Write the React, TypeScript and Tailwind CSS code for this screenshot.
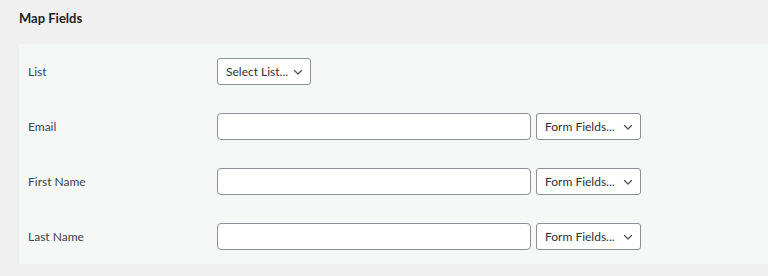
import React from 'react'

function Chevron() {
  return (
    <svg width="10" height="10" viewBox="0 0 10 10" className="shrink-0">
      <path d="M1.5 3.5 L5 7 L8.5 3.5" fill="none" stroke="#50575e" strokeWidth="1.3" strokeLinecap="round" strokeLinejoin="round" />
    </svg>
  )
}

function SelectBox({ label, width }: { label: string; width: string }) {
  return (
    <div
      className={`flex items-center justify-between h-[27px] ${width} pl-[8px] pr-[7px] bg-white border border-[#8c8f94] rounded-[3px] text-[12px] text-[#2c3338]`}
    >
      <span className="whitespace-nowrap">{label}</span>
      <Chevron />
    </div>
  )
}

function FieldRow({ label }: { label: string }) {
  return (
    <div className="flex items-center h-[55px]">
      <div className="w-[198px] pl-[9px] text-[12px] text-[#3c434a]">{label}</div>
      <div className="flex items-center gap-[5px]">
        <div className="w-[314px] h-[27px] bg-white border border-[#8c8f94] rounded-[4px]" />
        <SelectBox label="Form Fields..." width="w-[105px]" />
      </div>
    </div>
  )
}

export default function App() {
  const fields = ['Email', 'First Name', 'Last Name']

  return (
    <div className="w-[768px] h-[276px] bg-[#f0f0f1] overflow-hidden" style={{ fontFamily: 'Lato, "Noto Sans", sans-serif' }}>
      <div className="h-[44px] pl-[19px] pt-[9px]">
        <h2 className="text-[13px] font-bold text-[#1d2327] leading-[18px]">Map Fields</h2>
      </div>
      <div className="ml-[19px] bg-[#f6f7f7]">
        <div className="flex items-center h-[55px]">
          <div className="w-[198px] pl-[9px] text-[12px] text-[#3c434a]">List</div>
          <SelectBox label="Select List..." width="w-[94px]" />
        </div>
        {fields.map((field, index) => (
          <FieldRow key={index} label={field} />
        ))}
      </div>
    </div>
  )
}
